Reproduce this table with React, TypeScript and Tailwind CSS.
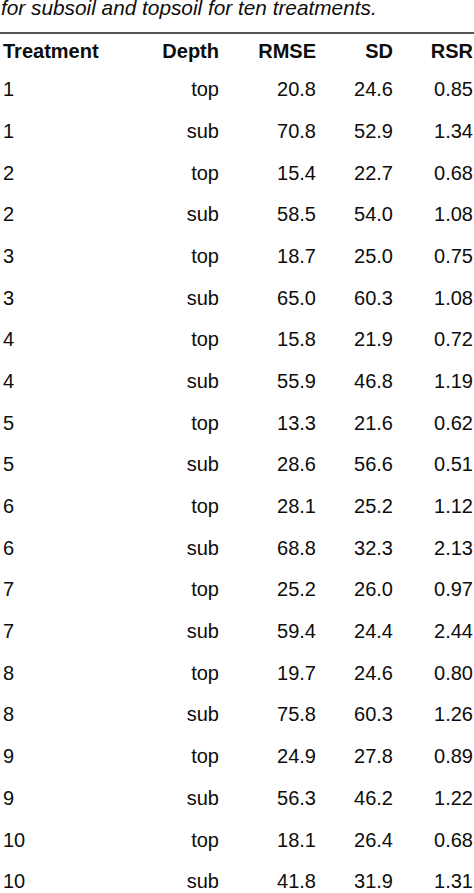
const rows: [string, string, string, string, string][] = [
  ["1", "top", "20.8", "24.6", "0.85"],
  ["1", "sub", "70.8", "52.9", "1.34"],
  ["2", "top", "15.4", "22.7", "0.68"],
  ["2", "sub", "58.5", "54.0", "1.08"],
  ["3", "top", "18.7", "25.0", "0.75"],
  ["3", "sub", "65.0", "60.3", "1.08"],
  ["4", "top", "15.8", "21.9", "0.72"],
  ["4", "sub", "55.9", "46.8", "1.19"],
  ["5", "top", "13.3", "21.6", "0.62"],
  ["5", "sub", "28.6", "56.6", "0.51"],
  ["6", "top", "28.1", "25.2", "1.12"],
  ["6", "sub", "68.8", "32.3", "2.13"],
  ["7", "top", "25.2", "26.0", "0.97"],
  ["7", "sub", "59.4", "24.4", "2.44"],
  ["8", "top", "19.7", "24.6", "0.80"],
  ["8", "sub", "75.8", "60.3", "1.26"],
  ["9", "top", "24.9", "27.8", "0.89"],
  ["9", "sub", "56.3", "46.2", "1.22"],
  ["10", "top", "18.1", "26.4", "0.68"],
  ["10", "sub", "41.8", "31.9", "1.31"],
]

const cols = "grid grid-cols-[120px_96px_97px_77px_80px] items-center"

export default function App() {
  return (
    <div className="h-[893px] w-[474px] overflow-hidden bg-white text-[#0d0d0d] font-['Liberation_Sans',Arial,sans-serif]">
      {/* caption */}
      <div className="h-[32px] pl-[1px]">
        <p className="whitespace-nowrap text-[20.8px] italic leading-[15.5px]">
          for subsoil and topsoil for ten treatments.
        </p>
      </div>

      <div className="border-t-2 border-[#555]" />

      <div className="pl-[3px] text-[20px]">
        <div className={`${cols} h-[34.3px] font-bold`}>
          <span>Treatment</span>
          <span className="text-right">Depth</span>
          <span className="text-right">RMSE</span>
          <span className="text-right">SD</span>
          <span className="text-right">RSR</span>
        </div>

        {rows.map((r, i) => (
          <div key={i} className={`${cols} h-[41.7px]`}>
            <span>{r[0]}</span>
            <span className="text-right">{r[1]}</span>
            <span className="text-right">{r[2]}</span>
            <span className="text-right">{r[3]}</span>
            <span className="text-right">{r[4]}</span>
          </div>
        ))}
      </div>
    </div>
  )
}
